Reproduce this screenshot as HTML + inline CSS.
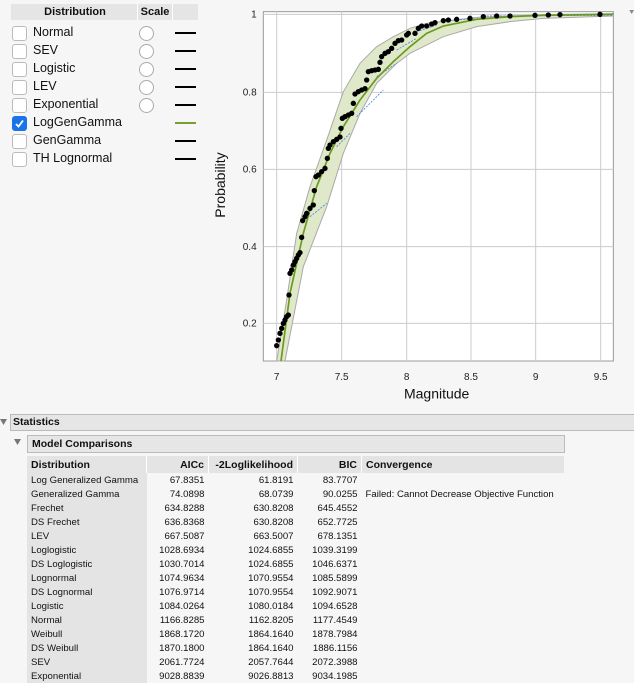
<!DOCTYPE html>
<html><head><style>
body{margin:0;width:634px;height:680px;background:#f6f6f6;font-family:"Liberation Sans",sans-serif;position:relative;overflow:hidden;color:#111}
.a{position:absolute}
.cb{position:absolute;left:12px;width:13px;height:13px;border:1px solid #bbb;border-radius:3px;background:#fff}
.lab{position:absolute;left:33px;font-size:12.5px}
.rad{position:absolute;left:139px;width:13px;height:13px;border:1px solid #aaa;border-radius:50%;background:#fff}
.ln{position:absolute;left:175px;width:21px;height:2px;background:#000}
table{border-collapse:collapse;font-size:9.6px}
td{height:14px;padding:0 4px;white-space:nowrap}
td.n{text-align:right}
td.d{background:#e4e4e4}
</style></head><body>
<div class="a" style="left:11px;top:4px;width:187px;height:16px;background:#e5e5e5"></div>
<div class="a" style="left:15px;top:4px;font-size:11px;font-weight:bold;width:120px;text-align:center;line-height:16px">Distribution</div>
<div class="a" style="left:137px;top:4px;width:1px;height:16px;background:#fff"></div>
<div class="a" style="left:172px;top:4px;width:1px;height:16px;background:#fff"></div>
<div class="a" style="left:138px;top:4px;font-size:11px;font-weight:bold;width:34px;text-align:center;line-height:16px">Scale</div>

<div class="cb" style="top:26px"></div><div class="lab" style="top:25px">Normal</div><div class="rad" style="top:26px"></div><div class="ln" style="top:32px"></div>
<div class="cb" style="top:44px"></div><div class="lab" style="top:43px">SEV</div><div class="rad" style="top:44px"></div><div class="ln" style="top:50px"></div>
<div class="cb" style="top:62px"></div><div class="lab" style="top:61px">Logistic</div><div class="rad" style="top:62px"></div><div class="ln" style="top:68px"></div>
<div class="cb" style="top:80px"></div><div class="lab" style="top:79px">LEV</div><div class="rad" style="top:80px"></div><div class="ln" style="top:86px"></div>
<div class="cb" style="top:98px"></div><div class="lab" style="top:97px">Exponential</div><div class="rad" style="top:98px"></div><div class="ln" style="top:104px"></div>
<div class="cb" style="top:116px;background:#1a73e8;border-color:#1a73e8"><svg width="13" height="13" style="position:absolute;left:0;top:0"><path d="M3 7 L5.5 9.5 L10 3.5" stroke="#fff" stroke-width="1.8" fill="none"/></svg></div><div class="lab" style="top:115px">LogGenGamma</div><div class="ln" style="top:122px;background:#7aa02c"></div>
<div class="cb" style="top:134px"></div><div class="lab" style="top:133px">GenGamma</div><div class="ln" style="top:140px"></div>
<div class="cb" style="top:152px"></div><div class="lab" style="top:151px">TH Lognormal</div><div class="ln" style="top:158px"></div>

<svg class="a" style="left:210px;top:0" width="424" height="410" viewBox="0 0 1272 1230" font-family="Liberation Sans,sans-serif">
<rect x="160" y="35" width="1050" height="1048" fill="#fff" stroke="#999" stroke-width="3"/>
<g stroke="#ccc" stroke-width="3">
<line x1="200" y1="35" x2="200" y2="1083"/><line x1="395" y1="35" x2="395" y2="1083"/><line x1="590" y1="35" x2="590" y2="1083"/><line x1="783" y1="35" x2="783" y2="1083"/><line x1="977" y1="35" x2="977" y2="1083"/><line x1="1172" y1="35" x2="1172" y2="1083"/>
<line x1="160" y1="43" x2="1210" y2="43"/><line x1="160" y1="277" x2="1210" y2="277"/><line x1="160" y1="508" x2="1210" y2="508"/><line x1="160" y1="740" x2="1210" y2="740"/><line x1="160" y1="970" x2="1210" y2="970"/>
</g>
<path d="M200,1083 L230,900 L260,700 L300,560 L350,420 L400,275 L450,190 L500,140 L550,110 L600,85 L650,70 L800,52 L1000,44 L1210,41 L1210,48 L1000,55 L900,65 L800,80 L700,110 L600,160 L560,190 L500,250 L450,340 L400,460 L350,620 L280,800 L225,1083 Z" fill="#dfe8c8" stroke="#aaa" stroke-width="3"/>
<path d="M440,350 L520,270 M380,440 L420,400 M300,650 L350,610 M500,230 L560,190 M560,150 L620,115 M620,95 L680,75 M700,62 L820,55 M820,48 L1210,46 M240,800 L270,760" stroke="#4a7fe0" stroke-width="2.5" stroke-dasharray="6 4" fill="none"/>
<path d="M213,1083 L240,880 L280,700 L320,560 L360,460 L400,380 L450,300 L500,235 L550,185 L600,140 L650,100 L700,78 L800,58 L900,50 L1000,46 L1210,43" fill="none" stroke="#6a9a1f" stroke-width="5"/>
<g fill="#000">
<circle cx="200" cy="1037" r="8"/><circle cx="205" cy="1020" r="8"/><circle cx="210" cy="1000" r="8"/><circle cx="215" cy="985" r="8"/><circle cx="220" cy="970" r="8"/><circle cx="225" cy="960" r="8"/><circle cx="230" cy="950" r="8"/><circle cx="235" cy="945" r="8"/><circle cx="237" cy="885" r="8"/><circle cx="240" cy="820" r="8"/><circle cx="245" cy="810" r="8"/><circle cx="250" cy="795" r="8"/><circle cx="255" cy="785" r="8"/><circle cx="260" cy="775" r="8"/><circle cx="265" cy="765" r="8"/><circle cx="270" cy="758" r="8"/><circle cx="275" cy="712" r="8"/><circle cx="278" cy="662" r="8"/><circle cx="285" cy="650" r="8"/><circle cx="290" cy="640" r="8"/><circle cx="300" cy="625" r="8"/><circle cx="310" cy="615" r="8"/><circle cx="313" cy="572" r="8"/><circle cx="318" cy="530" r="8"/><circle cx="325" cy="525" r="8"/><circle cx="335" cy="515" r="8"/><circle cx="345" cy="505" r="8"/><circle cx="352" cy="475" r="8"/><circle cx="355" cy="445" r="8"/><circle cx="360" cy="435" r="8"/><circle cx="370" cy="425" r="8"/><circle cx="380" cy="418" r="8"/><circle cx="390" cy="411" r="8"/><circle cx="393" cy="385" r="8"/><circle cx="397" cy="355" r="8"/><circle cx="405" cy="350" r="8"/><circle cx="415" cy="345" r="8"/><circle cx="425" cy="340" r="8"/><circle cx="430" cy="310" r="8"/><circle cx="435" cy="282" r="8"/><circle cx="445" cy="275" r="8"/><circle cx="455" cy="270" r="8"/><circle cx="465" cy="266" r="8"/><circle cx="470" cy="240" r="8"/><circle cx="475" cy="215" r="8"/><circle cx="485" cy="212" r="8"/><circle cx="495" cy="210" r="8"/><circle cx="505" cy="208" r="8"/><circle cx="510" cy="187" r="8"/><circle cx="515" cy="170" r="8"/><circle cx="525" cy="160" r="8"/><circle cx="535" cy="155" r="8"/><circle cx="545" cy="145" r="8"/><circle cx="555" cy="130" r="8"/><circle cx="565" cy="122" r="8"/><circle cx="575" cy="120" r="8"/><circle cx="590" cy="105" r="8"/><circle cx="595" cy="100" r="8"/><circle cx="615" cy="100" r="8"/><circle cx="625" cy="85" r="8"/><circle cx="635" cy="78" r="8"/><circle cx="650" cy="78" r="8"/><circle cx="665" cy="72" r="8"/><circle cx="675" cy="68" r="8"/><circle cx="700" cy="62" r="8"/><circle cx="715" cy="60" r="8"/><circle cx="740" cy="58" r="8"/><circle cx="780" cy="55" r="8"/><circle cx="820" cy="50" r="8"/><circle cx="860" cy="48" r="8"/><circle cx="900" cy="48" r="8"/><circle cx="975" cy="46" r="8"/><circle cx="1015" cy="45" r="8"/><circle cx="1050" cy="44" r="8"/><circle cx="1170" cy="43" r="8"/>
</g>
<g font-size="30" fill="#222" text-anchor="end">
<text x="140" y="53">1</text><text x="140" y="287">0.8</text><text x="140" y="518">0.6</text><text x="140" y="750">0.4</text><text x="140" y="980">0.2</text>
</g>
<g font-size="30" fill="#222" text-anchor="middle">
<text x="200" y="1140">7</text><text x="395" y="1140">7.5</text><text x="590" y="1140">8</text><text x="783" y="1140">8.5</text><text x="977" y="1140">9</text><text x="1172" y="1140">9.5</text>
</g>
<text x="680" y="1196" font-size="42" text-anchor="middle" fill="#111">Magnitude</text>
<text transform="translate(45,555) rotate(-90)" font-size="42" text-anchor="middle" fill="#111">Probability</text>
<path d="M1258,30 L1272,30 L1265,42 Z" fill="#888"/>
</svg>

<svg class="a" style="left:0;top:418px" width="8" height="8"><path d="M0 1 L7 1 L3.5 7 Z" fill="#777"/></svg>
<div class="a" style="left:10px;top:414px;width:630px;height:15px;background:#e6e6e6;border:1px solid #bbb;font-size:10.5px;font-weight:bold;line-height:15px;padding-left:2px">Statistics</div>
<svg class="a" style="left:14px;top:438px" width="8" height="8"><path d="M0 1 L7 1 L3.5 7 Z" fill="#777"/></svg>
<div class="a" style="left:27px;top:435px;width:532px;height:16px;background:#e6e6e6;border:1px solid #bbb;font-size:10.5px;font-weight:bold;line-height:16px;padding-left:4px">Model Comparisons</div>

<table class="a" style="left:27px;top:456px;width:537px">
<tr style="background:#e4e4e4;font-weight:bold;font-size:10.5px"><td style="height:17px;width:111px">Distribution</td><td class="n" style="width:53px;border-left:1px solid #fff">AICc</td><td class="n" style="width:80px;border-left:1px solid #fff">-2Loglikelihood</td><td class="n" style="width:55px;border-left:1px solid #fff">BIC</td><td style="border-left:1px solid #fff">Convergence</td></tr>
<tr><td class="d">Log Generalized Gamma</td><td class="n">67.8351</td><td class="n">61.8191</td><td class="n">83.7707</td><td></td></tr>
<tr><td class="d">Generalized Gamma</td><td class="n">74.0898</td><td class="n">68.0739</td><td class="n">90.0255</td><td>Failed: Cannot Decrease Objective Function</td></tr>
<tr><td class="d">Frechet</td><td class="n">634.8288</td><td class="n">630.8208</td><td class="n">645.4552</td><td></td></tr>
<tr><td class="d">DS Frechet</td><td class="n">636.8368</td><td class="n">630.8208</td><td class="n">652.7725</td><td></td></tr>
<tr><td class="d">LEV</td><td class="n">667.5087</td><td class="n">663.5007</td><td class="n">678.1351</td><td></td></tr>
<tr><td class="d">Loglogistic</td><td class="n">1028.6934</td><td class="n">1024.6855</td><td class="n">1039.3199</td><td></td></tr>
<tr><td class="d">DS Loglogistic</td><td class="n">1030.7014</td><td class="n">1024.6855</td><td class="n">1046.6371</td><td></td></tr>
<tr><td class="d">Lognormal</td><td class="n">1074.9634</td><td class="n">1070.9554</td><td class="n">1085.5899</td><td></td></tr>
<tr><td class="d">DS Lognormal</td><td class="n">1076.9714</td><td class="n">1070.9554</td><td class="n">1092.9071</td><td></td></tr>
<tr><td class="d">Logistic</td><td class="n">1084.0264</td><td class="n">1080.0184</td><td class="n">1094.6528</td><td></td></tr>
<tr><td class="d">Normal</td><td class="n">1166.8285</td><td class="n">1162.8205</td><td class="n">1177.4549</td><td></td></tr>
<tr><td class="d">Weibull</td><td class="n">1868.1720</td><td class="n">1864.1640</td><td class="n">1878.7984</td><td></td></tr>
<tr><td class="d">DS Weibull</td><td class="n">1870.1800</td><td class="n">1864.1640</td><td class="n">1886.1156</td><td></td></tr>
<tr><td class="d">SEV</td><td class="n">2061.7724</td><td class="n">2057.7644</td><td class="n">2072.3988</td><td></td></tr>
<tr><td class="d">Exponential</td><td class="n">9028.8839</td><td class="n">9026.8813</td><td class="n">9034.1985</td><td></td></tr>
</table>
</body></html>
